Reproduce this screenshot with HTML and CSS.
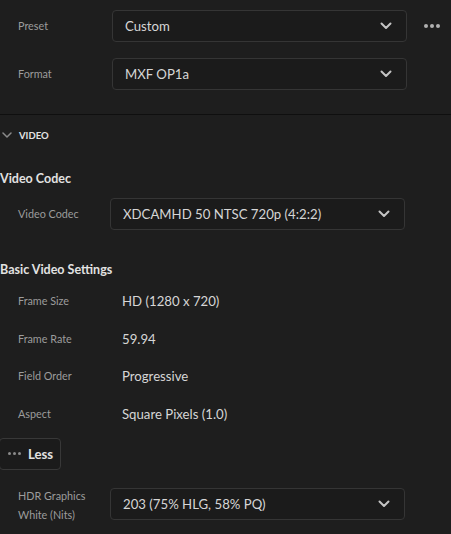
FILE: index.html
```html
<!DOCTYPE html>
<html lang="en">
<head>
  <meta charset="UTF-8" />
  <title>Export Settings</title>
  <link rel="stylesheet" href="styles.css">
</head>
<body>
  <section class="top">
    <div class="row">
      <span class="label">Preset</span>
      <div class="select">
        <span>Custom</span>
        <svg class="chev" width="12" height="8" viewBox="0 0 12 8"><path d="M1.5 1.5 6 6l4.5-4.5" /></svg>
      </div>
      <button class="more" title="More">
        <i></i><i></i><i></i>
      </button>
    </div>
    <div class="row">
      <span class="label">Format</span>
      <div class="select">
        <span>MXF OP1a</span>
        <svg class="chev" width="12" height="8" viewBox="0 0 12 8"><path d="M1.5 1.5 6 6l4.5-4.5" /></svg>
      </div>
    </div>
  </section>

  <section class="video">
    <div class="section-head">
      <svg class="twisty" width="10" height="6" viewBox="0 0 10 6"><path d="M1 1l4 4 4-4" /></svg>
      <span>VIDEO</span>
    </div>

    <h3>Video Codec</h3>
    <div class="row">
      <span class="label">Video Codec</span>
      <div class="select">
        <span>XDCAMHD 50 NTSC 720p (4:2:2)</span>
        <svg class="chev" width="12" height="8" viewBox="0 0 12 8"><path d="M1.5 1.5 6 6l4.5-4.5" /></svg>
      </div>
    </div>

    <h3 class="basic">Basic Video Settings</h3>
    <div class="info">
      <span class="label">Frame Size</span><span class="value">HD (1280 x 720)</span>
      <span class="label">Frame Rate</span><span class="value">59.94</span>
      <span class="label">Field Order</span><span class="value">Progressive</span>
      <span class="label">Aspect</span><span class="value">Square Pixels (1.0)</span>
    </div>

    <button class="less"><span class="dots"><i></i><i></i><i></i></span>Less</button>

    <div class="row hdr">
      <span class="label">HDR Graphics<br>White (Nits)</span>
      <div class="select">
        <span>203 (75% HLG, 58% PQ)</span>
        <svg class="chev" width="12" height="8" viewBox="0 0 12 8"><path d="M1.5 1.5 6 6l4.5-4.5" /></svg>
      </div>
    </div>
  </section>
</body>
</html>
```

FILE: styles.css
```css
:root {
  --bg: #1e1e1e;
  --field: #1b1b1b;
  --border: #353535;
  --label: #9c9c9c;
  --text: #d6d6d6;
  --head: #e2e2e2;
}

body {
  margin: 0;
  background: var(--bg);
  color: var(--text);
  font-family: Lato, 'Open Sans', sans-serif;
  overflow: hidden;
}

.top {
  padding: 10px 0 24px 18px;
  border-bottom: 1px solid #0f0f0f;
  display: flex;
  flex-direction: column;
  gap: 16px;
}

.row {
  display: grid;
  grid-template-columns: 92px 295px auto;
  align-items: center;
}

.top .row {
  grid-template-columns: 94px 295px auto;
}

.label {
  font-size: 10.8px;
  color: var(--label);
  line-height: 18px;
}

.select {
  height: 30px;
  border: 1px solid var(--border);
  border-radius: 4px;
  background: var(--field);
  display: flex;
  align-items: center;
  justify-content: space-between;
  padding: 0 14px 0 12px;
  font-size: 13.2px;
  color: var(--text);
}

.chev path,
.twisty path {
  fill: none;
  stroke: #c4c4c4;
  stroke-width: 2;
  stroke-linecap: round;
  stroke-linejoin: round;
}

.more {
  background: none;
  border: none;
  padding: 0;
  margin-left: 17px;
  display: flex;
  gap: 2px;
}

.more i {
  width: 4px;
  height: 4px;
  border-radius: 50%;
  background: #b0b0b0;
}

.section-head {
  display: flex;
  align-items: center;
  height: 40px;
  font-size: 9.5px;
  font-weight: bold;
  color: var(--head);
}

.twisty {
  margin: 0 7px 0 2px;
}

.twisty path {
  stroke: #8a8a8a;
  stroke-width: 1.5;
}

h3 {
  margin: 0;
  font-size: 12.5px;
  font-weight: bold;
  color: var(--head);
  line-height: 18px;
}

.video h3 {
  padding-top: 15px;
  padding-bottom: 10px;
}

.video .row {
  padding-left: 18px;
}

.video h3.basic {
  padding-top: 31px;
  padding-bottom: 13px;
}

.info {
  display: grid;
  grid-template-columns: 104px auto;
  row-gap: 19.5px;
  padding-left: 18px;
  align-items: center;
}

.value {
  font-size: 13.2px;
  line-height: 18px;
  color: var(--text);
}

.less {
  margin: 15px 0 0 -1px;
  height: 32px;
  padding: 0 7px 0 8px;
  background: var(--field);
  border: 1px solid #383838;
  border-radius: 4px;
  color: var(--head);
  font-family: inherit;
  font-size: 13.2px;
  font-weight: bold;
  display: flex;
  align-items: center;
  gap: 7px;
}

.less .dots {
  display: flex;
  gap: 2px;
}

.less .dots i {
  width: 3px;
  height: 3px;
  border-radius: 50%;
  background: #8a8a8a;
}

.row.hdr {
  margin-top: 14px;
}

.row.hdr .label {
  line-height: 19px;
  padding-top: 2px;
}
```
